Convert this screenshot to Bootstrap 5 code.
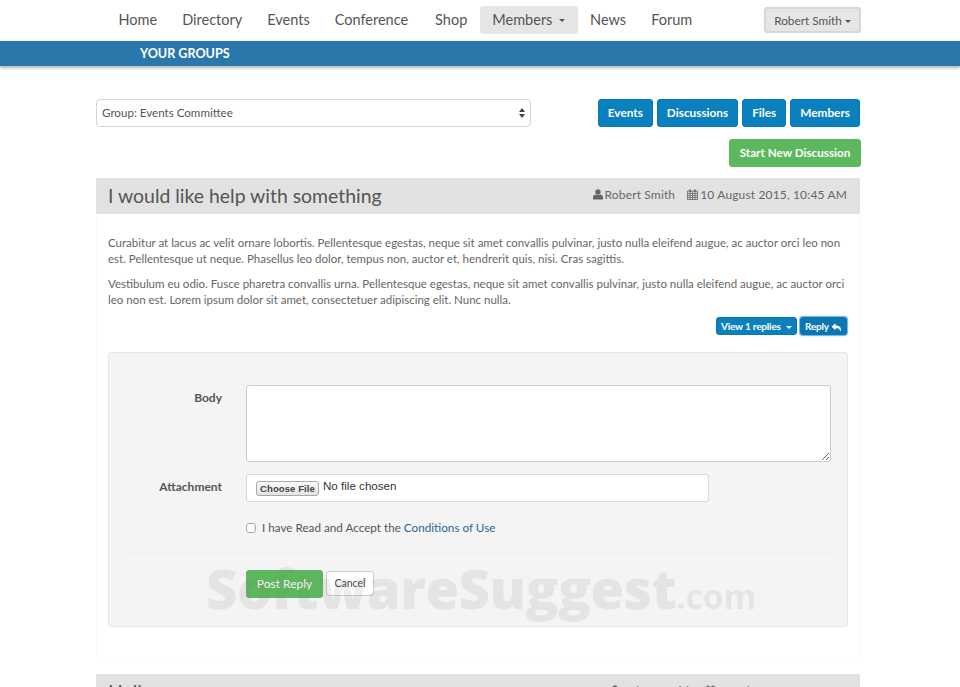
<!DOCTYPE html>
<html lang="en">
<head>
<meta charset="utf-8">
<title>Your Groups</title>
<link href="https://cdn.jsdelivr.net/npm/bootstrap@5.3.0/dist/css/bootstrap.min.css" rel="stylesheet">
<style>
html,body{height:687px;overflow:hidden}
body{background:#fff;color:#555;font-family:"Lato","Liberation Sans",sans-serif;font-size:12px;position:relative}
.topbar{height:41px;padding-left:108px;padding-right:99px;padding-bottom:2px}
.topbar .nav-link{color:#555;padding:0 10.5px;height:28px;line-height:28px;border-radius:3px;font-size:14.5px}
.topbar .nav-link.sel{background:#e6e6e6;padding:0 12.500px;margin:0 -2px}
.topbar .nav-link.shopx{margin-left:2px}
.topnav{gap:4px}
.caretx{display:inline-block;width:0;height:0;border-left:3.5px solid transparent;border-right:3.5px solid transparent;border-top:3.5px solid currentColor;vertical-align:middle;margin-left:3px}
.userbtn{height:26px;width:97px;background:#e6e6e6;border:2px solid #d6d6d6;border-radius:3px;color:#555;font-size:11.8px;padding:0;line-height:19px;margin-top:1px}
.userbtn .caretx{margin-left:0}
.subbar{height:25px;background:#2a78ab;box-shadow:0 2px 3px rgba(0,0,0,.3);padding-left:140px;line-height:25px;color:#fff;font-weight:700;font-size:12.6px}
.mainwrap{width:764px;margin-left:96px}
.toprow{margin-top:33px;height:28px}
.groupsel{width:435px;height:28px;border:1px solid #d5d5d5;border-radius:4px;padding:0 0 0 5px;font-size:11.6px;color:#555;background-color:#fff;background-image:url("data:image/svg+xml,%3csvg xmlns='http://www.w3.org/2000/svg' viewBox='0 0 8 12'%3e%3cpath d='M4 1 7 5H1ZM4 11 1 7H7Z' fill='%23444'/%3e%3c/svg%3e");background-position:right 4px center;background-size:8px 12px;line-height:26px}
.bluebtn{background:#0a80bf;border:1px solid #0a78b4;color:#fff;font-size:11.8px;border-radius:3px;height:28px;padding:0 9px;line-height:26px;font-weight:700}
.bluebtn:hover{background:#0a80bf;color:#fff}
.tabgap{gap:4px;margin-left:-2px}
.greenbtn{background:#5cb85c;border:1px solid #5cb85c;color:#fff;font-size:11.7px;border-radius:3px;font-weight:700;height:28px;padding:0;line-height:25px;width:132px;margin-right:-1px;white-space:nowrap}
.startrow{margin-top:12px;height:28px}
.posthead{background:#e2e2e2;height:36px;margin-top:11px;padding:0 13px 0 12px;border-radius:1px}
.posthead h5{font-weight:400;font-size:19.4px;margin:0;color:#555}
.metax{font-size:12px;color:#666;letter-spacing:.15px;gap:12px;margin-top:-2px}
.metax svg{margin-right:2px;vertical-align:-1px}
.postbody{padding:21px 11px 0;border:1px solid #fafafa;border-top:0;border-radius:0 0 3px 3px;height:444px;width:764px}
.postbody p{font-size:11.5px;line-height:16px;color:#666;margin:0 0 9px;width:741px}
.actrow{gap:3px;margin-top:9px;height:19px;margin-right:1px}
.smbtn{background:#0a80bf;color:#fff;border:1px solid #0a78b4;border-radius:3px;font-size:10px;height:18px;padding:0 4px;line-height:16px;font-weight:700;letter-spacing:-.2px;white-space:nowrap}
.smbtn:hover{background:#0a80bf;color:#fff}
.smbtn.focusx{width:47px;box-shadow:0 0 0 1px #7fb8de,0 0 3px #66afe9;background:#0a77b4}
.formwell{background:#f4f4f4;border:1px solid #e6e6e6;border-radius:3px;height:275px;margin-top:16px;padding:32px 16px 0;width:740px}
.rowx{display:flex}
.labx{width:97px;text-align:right;font-weight:700;font-size:12px;color:#555;flex:none;padding-top:4px}
.fieldx{margin-left:24px}
.bodyta{width:585px;height:77px;border:1px solid #ccc;border-radius:3px;background:#fff;display:block;padding:4px;resize:vertical}
.attachrow{margin-top:12px}
.filebox{width:463px;height:28px;border:1px solid #d6d6d6;border-radius:3px;background:#fff;padding:0 9px;display:flex;align-items:center;gap:4px;font-family:"Liberation Sans",sans-serif;font-size:11.6px;color:#333}
.filelabel{margin-bottom:4px}
.chfile{background:linear-gradient(#f8f8f8,#e4e4e4);border:1px solid #a9a9a9;border-radius:3px;font-size:9.5px;height:15px;width:63px;line-height:13px;text-align:center;font-weight:700;margin-top:1px;color:#444;letter-spacing:.1px}
.checkline{margin-top:19px;margin-left:121px;font-size:11.7px;display:flex;align-items:center;color:#555;height:14px}
.checkline input{margin:0 6px 0 0;width:10px;height:10px;border-color:#aaa;border-radius:2px}
.checkline a{color:#2a6496;text-decoration:none;margin-left:3px}
.hrline{border-top:1px solid #eee;margin-top:18px;width:706px}
.btnline{margin-top:16px;margin-left:121px;gap:3px;align-items:flex-start}
.postbtn{background:#5cb85c;border:1px solid #5cb85c;color:#fff;font-size:12px;border-radius:3px;width:77px;height:28px;line-height:26px;padding:0;font-weight:400}
.cancelbtn{background:#fff;border:1px solid #ccc;color:#444;font-size:10.5px;border-radius:3px;width:48px;height:25px;line-height:23px;padding:0;margin-top:1px}
.posthead2{background:#e2e2e2;height:36px;margin-top:16px;padding:0 13px 0 12px;border-radius:1px}
.posthead2 h5{font-weight:400;font-size:19.4px;margin:0;color:#555}
.wmark{position:absolute;left:206px;top:553px;font-family:"Open Sans","Liberation Sans",sans-serif;font-weight:800;color:rgba(120,120,120,.13);font-size:54.5px;line-height:70px;letter-spacing:-.5px;white-space:nowrap;pointer-events:none}
.wmark span{font-size:33.5px;letter-spacing:0;font-weight:700}
</style>
</head>
<body>
<div class="topbar d-flex align-items-center justify-content-between">
  <ul class="nav topnav align-items-center">
    <li class="nav-item"><a class="nav-link" href="#">Home</a></li>
    <li class="nav-item"><a class="nav-link" href="#">Directory</a></li>
    <li class="nav-item"><a class="nav-link" href="#">Events</a></li>
    <li class="nav-item"><a class="nav-link" href="#">Conference</a></li>
    <li class="nav-item"><a class="nav-link shopx" href="#">Shop</a></li>
    <li class="nav-item"><a class="nav-link sel" href="#">Members <span class="caretx"></span></a></li>
    <li class="nav-item"><a class="nav-link" href="#">News</a></li>
    <li class="nav-item"><a class="nav-link" href="#">Forum</a></li>
  </ul>
  <button type="button" class="btn userbtn">Robert Smith <span class="caretx"></span></button>
</div>
<div class="subbar">YOUR GROUPS</div>
<div class="mainwrap">
  <div class="toprow d-flex justify-content-between">
    <select class="form-select groupsel" aria-label="Group"><option>Group: Events Committee</option></select>
    <div class="d-flex tabgap">
      <a class="btn bluebtn" href="#">Events</a>
      <a class="btn bluebtn" href="#">Discussions</a>
      <a class="btn bluebtn" href="#">Files</a>
      <a class="btn bluebtn" href="#">Members</a>
    </div>
  </div>
  <div class="startrow d-flex justify-content-end"><a class="btn greenbtn" href="#">Start New Discussion</a></div>
  <div class="posthead d-flex align-items-center justify-content-between">
    <h5>I would like help with something</h5>
    <div class="metax d-flex">
      <span><svg width="10" height="11" viewBox="0 0 10 11"><circle cx="5" cy="3" r="2.7" fill="#666"/><path d="M0 10.500V8.200C0 6.600 1.500 5.600 2.600 5.400 3.400 6.200 6.600 6.200 7.400 5.400 8.500 5.600 10 6.600 10 8.200V10.500Z" fill="#666"/></svg>Robert Smith</span>
      <span><svg width="11" height="11" viewBox="0 0 11 11"><path d="M.5 2H10.500V10.500H.5ZM.5 4.500H10.500M.5 6.500H10.500M.5 8.500H10.500M3 2V10.500M5.500 2V10.500M8 2V10.500" fill="none" stroke="#666" stroke-width=".8"/><path d="M2.200 .5H3.800V3H2.200ZM7.200 .5H8.800V3H7.200Z" fill="#666"/></svg>10 August 2015, 10:45 AM</span>
    </div>
  </div>
  <div class="postbody">
    <p>Curabitur at lacus ac velit ornare lobortis. Pellentesque egestas, neque sit amet convallis pulvinar, justo nulla eleifend augue, ac auctor orci leo non est. Pellentesque ut neque. Phasellus leo dolor, tempus non, auctor et, hendrerit quis, nisi. Cras sagittis.</p>
    <p>Vestibulum eu odio. Fusce pharetra convallis urna. Pellentesque egestas, neque sit amet convallis pulvinar, justo nulla eleifend augue, ac auctor orci leo non est. Lorem ipsum dolor sit amet, consectetuer adipiscing elit. Nunc nulla.</p>
    <div class="actrow d-flex justify-content-end">
      <a class="btn smbtn" href="#">View 1 replies <span class="caretx"></span></a>
      <a class="btn smbtn focusx" href="#">Reply <svg width="11" height="9" viewBox="0 0 10 9"><path d="M4 .3 0 3.700 4 7.200V5.200C6.500 5.200 8.200 5.700 9.200 8.600 10.300 4.500 8 2.300 4 2.200Z" fill="#fff"/></svg></a>
    </div>
    <form class="formwell">
      <div class="rowx"><label class="labx" for="bodyx">Body</label><div class="fieldx"><textarea id="bodyx" class="bodyta"></textarea></div></div>
      <div class="rowx attachrow"><label class="labx">Attachment</label><div class="fieldx"><div class="filebox"><span class="chfile">Choose File</span><span class="filelabel">No file chosen</span></div></div></div>
      <div class="checkline"><input class="form-check-input" type="checkbox" id="cond"><label for="cond">I have Read and Accept the</label><a href="#">Conditions of Use</a></div>
      <div class="hrline"></div>
      <div class="btnline d-flex"><button type="button" class="btn postbtn">Post Reply</button><button type="button" class="btn cancelbtn">Cancel</button></div>
    </form>
  </div>
  <div class="posthead2 d-flex align-items-center justify-content-between">
    <h5>Hello</h5>
    <div class="metax d-flex">
      <span><svg width="10" height="11" viewBox="0 0 10 11"><circle cx="5" cy="3" r="2.7" fill="#666"/><path d="M0 10.500V8.200C0 6.600 1.500 5.600 2.600 5.400 3.400 6.200 6.600 6.200 7.400 5.400 8.500 5.600 10 6.600 10 8.200V10.500Z" fill="#666"/></svg>Robert Smith</span>
      <span><svg width="11" height="11" viewBox="0 0 11 11"><path d="M.5 2H10.500V10.500H.5ZM.5 4.500H10.500M.5 6.500H10.500M.5 8.500H10.500M3 2V10.500M5.500 2V10.500M8 2V10.500" fill="none" stroke="#666" stroke-width=".8"/><path d="M2.200 .5H3.800V3H2.200ZM7.200 .5H8.800V3H7.200Z" fill="#666"/></svg>17 July 2015, 03:30 PM</span>
    </div>
  </div>
</div>
<div class="wmark">SoftwareSuggest<span>.com</span></div>
<script src="https://cdn.jsdelivr.net/npm/bootstrap@5.3.0/dist/js/bootstrap.bundle.min.js"></script>
</body>
</html>
